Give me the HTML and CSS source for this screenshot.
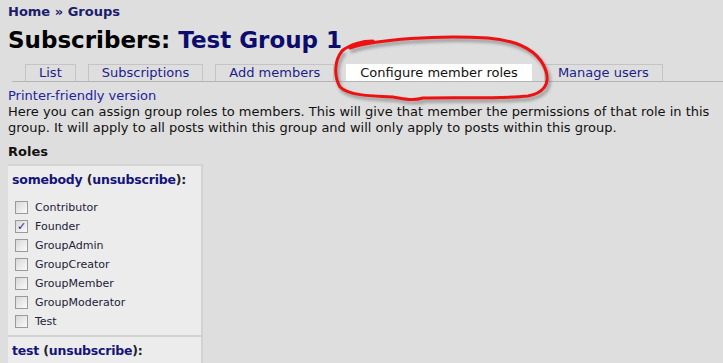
FILE: index.html
```html
<!DOCTYPE html>
<html lang="en">
<head>
  <meta charset="UTF-8" />
  <title>Subscribers: Test Group 1</title>
  <link rel="stylesheet" href="styles.css">
</head>
<body>

  <div class="breadcrumb"><a href="#">Home</a> » <a href="#">Groups</a></div>

  <h1>Subscribers: <a href="#">Test Group 1</a></h1>

  <ul class="tabs">
    <li><a href="#">List</a></li>
    <li><a href="#">Subscriptions</a></li>
    <li><a href="#">Add members</a></li>
    <li class="active"><a href="#">Configure member roles</a></li>
    <li><a href="#">Manage users</a></li>
  </ul>

  <a class="printer" href="#">Printer-friendly version</a>
  <p class="help">Here you can assign group roles to members. This will give that member the permissions of that role in this group. It will apply to all posts within this group and will only apply to posts within this group.</p>

  <h3 class="roles-title">Roles</h3>

  <div class="roles-box">
    <div class="member">
      <h4><a href="#">somebody</a> (<a href="#">unsubscribe</a>):</h4>
      <ul class="role-list">
        <li><label><input type="checkbox" /> Contributor</label></li>
        <li><label><input type="checkbox" checked /> Founder</label></li>
        <li><label><input type="checkbox" /> GroupAdmin</label></li>
        <li><label><input type="checkbox" /> GroupCreator</label></li>
        <li><label><input type="checkbox" /> GroupMember</label></li>
        <li><label><input type="checkbox" /> GroupModerator</label></li>
        <li><label><input type="checkbox" /> Test</label></li>
      </ul>
    </div>
    <div class="member">
      <h4><a href="#">test</a> (<a href="#">unsubscribe</a>):</h4>
    </div>
  </div>

  <!-- hand-drawn annotation round the active tab -->
  <svg class="scribble" width="230" height="80" viewBox="0 0 230 80">
    <path class="shadow" d="M22 14 C50 5 110 1 160 4 C195 7 212 19 218 37 C222 51 215 59 200 62 C170 65 130 63 95 64 C85 67 78 65 65 63 C40 62 20 61 12 53 C6 43 6 27 14 17" />
    <path class="ring" d="M22 14 C50 5 110 1 160 4 C195 7 212 19 218 37 C222 51 215 59 200 62 C170 65 130 63 95 64 C85 67 78 65 65 63 C40 62 20 61 12 53 C6 43 6 27 14 17 C22 10 35 7 45 7" />
  </svg>

</body>
</html>
```

FILE: styles.css
```css
body {
  margin: 0;
  padding: 4px 0 0 8px;
  font-family: 'DejaVu Sans', Verdana, sans-serif;
  font-size: 13px;
  line-height: 16px;
  background-color: #dedede;
  color: #111;
  position: relative;
}
a {
  color: #1c1c8c;
  text-decoration: none;
}
.breadcrumb {
  font-weight: bold;
  color: #1c1c6c;
}
.breadcrumb a {
  color: #1c1c6c;
}
h1 {
  margin: 6px 0 0;
  font-size: 23px;
  line-height: 28px;
  color: #000;
}
h1 a {
  color: #0c0c6c;
}
.tabs {
  list-style: none;
  display: flex;
  gap: 12px;
  margin: 10px 0 0 4px;
  padding: 0 0 0 13px;
  border-bottom: 1px solid #b4b4b4;
}
.tabs li {
  border: 1px solid #c4c4c4;
  border-bottom: none;
  padding: 0 13px;
  line-height: 16px;
}
.tabs li.active {
  background: #fff;
  border-color: #fff;
}
.tabs li.active a {
  color: #111;
}
.printer {
  display: block;
  margin-top: 6px;
  color: #2222a0;
}
.help {
  margin: 0;
}
.roles-title {
  margin: 8px 0 0;
  font-size: 13px;
  line-height: 16px;
}
.roles-box {
  width: 193px;
  margin-top: 4px;
  background: #ececec;
  border-top: 2px solid #d4d4d4;
  border-right: 2px solid #d2d2d2;
}
.member {
  padding: 6px 4px 4px;
}
.member + .member {
  border-top: 2px solid #d2d2d2;
}
.member h4 {
  margin: 0;
  font-size: 12.5px;
  line-height: 16px;
  white-space: nowrap;
  letter-spacing: -0.2px;
  color: #222;
}
.member h4 a {
  color: #14147a;
}
.role-list {
  list-style: none;
  margin: 10px 0 0;
  padding: 0 0 0 3px;
}
.role-list label {
  display: flex;
  align-items: center;
  gap: 7px;
  font-size: 11px;
  color: #222238;
  height: 19px;
}
.role-list input {
  appearance: none;
  -webkit-appearance: none;
  position: relative;
  margin: 0;
  width: 13px;
  height: 13px;
  border: 1px solid #9a9a9a;
  background: linear-gradient(135deg, #d8d8d8, #fafafa);
}
.role-list input:checked::before {
  content: "✓";
  position: absolute;
  left: 1px;
  top: -2px;
  font-size: 11px;
  line-height: 14px;
  color: #23237e;
}
.scribble {
  position: absolute;
  left: 328px;
  top: 34px;
  overflow: visible;
}
.scribble path {
  fill: none;
  stroke-linecap: round;
}
.scribble .ring {
  stroke: #ee1111;
  stroke-width: 3;
}
.scribble .shadow {
  stroke: rgba(90, 90, 90, 0.45);
  stroke-width: 4;
  transform: translate(2px, 3px);
  filter: blur(1.5px);
}
```
